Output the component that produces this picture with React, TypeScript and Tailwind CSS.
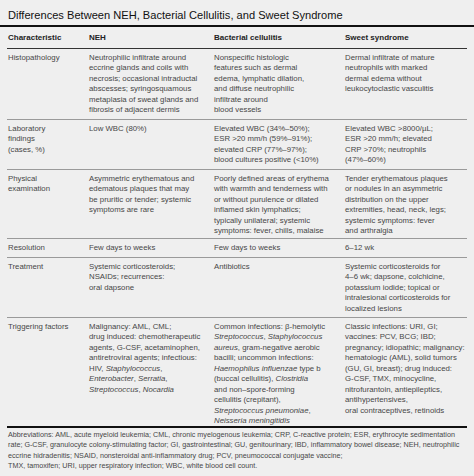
import React from 'react';

type Line = React.ReactNode;

type Row = {
    label: Line[];
    neh: Line[];
    bact: Line[];
    sweet: Line[];
    h: string;
};

const I = ({ children }: { children: React.ReactNode }) => <i>{children}</i>;

const rows: Row[] = [
    {
        label: ['Histopathology'],
        neh: [
            'Neutrophilic infiltrate around',
            'eccrine glands and coils with',
            'necrosis; occasional intraductal',
            'abscesses; syringosquamous',
            'metaplasia of sweat glands and',
            'fibrosis of adjacent dermis',
        ],
        bact: [
            'Nonspecific histologic',
            'features such as dermal',
            'edema, lymphatic dilation,',
            'and diffuse neutrophilic',
            'infiltrate around',
            'blood vessels',
        ],
        sweet: [
            'Dermal infiltrate of mature',
            'neutrophils with marked',
            'dermal edema without',
            'leukocytoclastic vasculitis',
        ],
        h: 'h-[71px]',
    },
    {
        label: ['Laboratory', 'findings', '(cases, %)'],
        neh: ['Low WBC (80%)'],
        bact: [
            'Elevated WBC (34%–50%);',
            'ESR >20 mm/h (59%–91%);',
            'elevated CRP (77%–97%);',
            'blood cultures positive (<10%)',
        ],
        sweet: [
            'Elevated WBC >8000/µL;',
            'ESR >20 mm/h; elevated',
            'CRP >70%; neutrophils',
            '(47%–60%)',
        ],
        h: 'h-[50px]',
    },
    {
        label: ['Physical', 'examination'],
        neh: [
            'Asymmetric erythematous and',
            'edematous plaques that may',
            'be pruritic or tender; systemic',
            'symptoms are rare',
        ],
        bact: [
            'Poorly defined areas of erythema',
            'with warmth and tenderness with',
            'or without purulence or dilated',
            'inflamed skin lymphatics;',
            'typically unilateral; systemic',
            'symptoms: fever, chills, malaise',
        ],
        sweet: [
            'Tender erythematous plaques',
            'or nodules in an asymmetric',
            'distribution on the upper',
            'extremities, head, neck, legs;',
            'systemic symptoms: fever',
            'and arthralgia',
        ],
        h: 'h-[69px]',
    },
    {
        label: ['Resolution'],
        neh: ['Few days to weeks'],
        bact: ['Few days to weeks'],
        sweet: ['6–12 wk'],
        h: 'h-[19px]',
    },
    {
        label: ['Treatment'],
        neh: ['Systemic corticosteroids;', 'NSAIDs; recurrences:', 'oral dapsone'],
        bact: ['Antibiotics'],
        sweet: [
            'Systemic corticosteroids for',
            '4–6 wk; dapsone, colchicine,',
            'potassium iodide; topical or',
            'intralesional corticosteroids for',
            'localized lesions',
        ],
        h: 'h-[60px]',
    },
    {
        label: ['Triggering factors'],
        neh: [
            'Malignancy: AML, CML;',
            'drug induced: chemotherapeutic',
            'agents, G-CSF, acetaminophen,',
            'antiretroviral agents; infectious:',
            <>HIV, <I>Staphylococcus</I>,</>,
            <><I>Enterobacter</I>, <I>Serratia</I>,</>,
            <><I>Streptococcus</I>, <I>Nocardia</I></>,
        ],
        bact: [
            'Common infections: β-hemolytic',
            <><I>Streptococcus</I>, <I>Staphylococcus</I></>,
            <><I>aureus</I>, gram-negative aerobic</>,
            'bacilli; uncommon infections:',
            <><I>Haemophilus influenzae</I> type b</>,
            <>(buccal cellulitis), <I>Clostridia</I></>,
            'and non–spore-forming',
            'cellulitis (crepitant),',
            <><I>Streptococcus pneumoniae</I>,</>,
            <I>Neisseria meningitidis</I>,
        ],
        sweet: [
            'Classic infections: URI, GI;',
            'vaccines: PCV, BCG; IBD;',
            'pregnancy; idiopathic; malignancy:',
            'hematologic (AML), solid tumors',
            '(GU, GI, breast); drug induced:',
            'G-CSF, TMX, minocycline,',
            'nitrofurantoin, antiepileptics,',
            'antihypertensives,',
            'oral contraceptives, retinoids',
        ],
        h: 'h-[110px]',
    },
];

const footnote = [
    'Abbreviations: AML, acute myeloid leukemia; CML, chronic myelogenous leukemia; CRP, C-reactive protein; ESR, erythrocyte sedimentation',
    'rate; G-CSF, granulocyte colony-stimulating factor; GI, gastrointestinal; GU, genitourinary; IBD, inflammatory bowel disease; NEH, neutrophilic',
    'eccrine hidradenitis; NSAID, nonsteroidal anti-inflammatory drug; PCV, pneumococcal conjugate vaccine;',
    'TMX, tamoxifen; URI, upper respiratory infection; WBC, white blood cell count.',
];

const Cell = ({ lines }: { lines: Line[] }) => (
    <div className="whitespace-nowrap">
        {lines.map((l, i) => (
            <div key={i}>{l}</div>
        ))}
    </div>
);

const App: React.FC = () => {
    return (
        <div className="w-[474px] h-[476px] bg-[#efefef] text-[#474747] overflow-hidden font-['Liberation_Sans',Arial,sans-serif]">
            {/* Title */}
            <div className="pt-[9px] pb-[3px] pl-[8px] text-[11.1px] leading-[13px] text-[#111]">
                Differences Between NEH, Bacterial Cellulitis, and Sweet Syndrome
            </div>
            <div className="h-[2px] bg-[#111]" />

            <div className="mx-[7px] text-[7.8px] leading-[10.5px]">
                {/* Header */}
                <div className="grid grid-cols-[81px_125px_131px_1fr] pl-px pt-[6px] pb-[4px] border-b-[1.5px] border-[#333] text-[8px] font-bold text-[#222]">
                    <div>Characteristic</div>
                    <div>NEH</div>
                    <div>Bacterial cellulitis</div>
                    <div>Sweet syndrome</div>
                </div>

                {rows.map((r, i) => (
                    <div
                        key={i}
                        className={`grid grid-cols-[81px_125px_131px_1fr] pl-px pt-[4px] ${r.h} ${
                            i === rows.length - 1 ? 'border-b-2 border-[#111]' : 'border-b border-[#9a9a9a]'
                        }`}
                    >
                        <Cell lines={r.label} />
                        <Cell lines={r.neh} />
                        <Cell lines={r.bact} />
                        <Cell lines={r.sweet} />
                    </div>
                ))}

                {/* Footnote */}
                <div className="pt-[2px] pl-px text-[7.2px] leading-[10.5px] whitespace-nowrap">
                    {footnote.map((f, i) => (
                        <div key={i}>{f}</div>
                    ))}
                </div>
            </div>
        </div>
    );
};

export default App;
